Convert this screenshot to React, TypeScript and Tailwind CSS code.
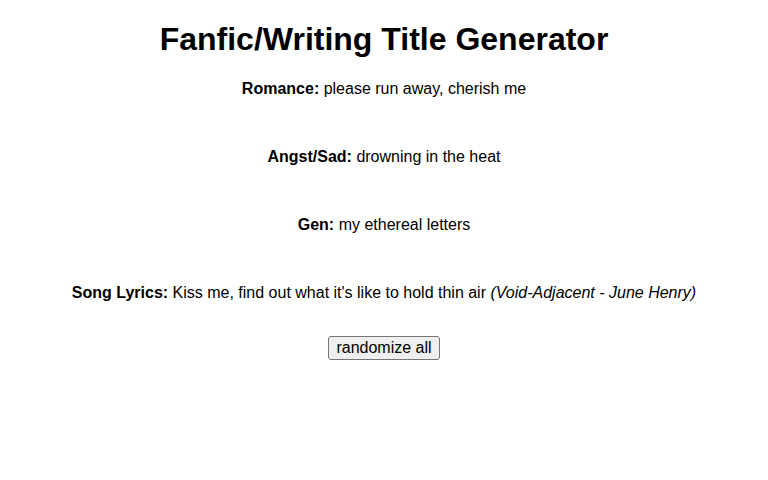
import React, { useState } from 'react';

type Category = {
  label: string;
  title: string;
  credit?: string;
};

const initial: Category[] = [
  { label: 'Romance', title: 'please run away, cherish me' },
  { label: 'Angst/Sad', title: 'drowning in the heat' },
  { label: 'Gen', title: 'my ethereal letters' },
  {
    label: 'Song Lyrics',
    title: "Kiss me, find out what it's like to hold thin air",
    credit: '(Void-Adjacent - June Henry)',
  },
];

const App = () => {
  const [items] = useState<Category[]>(initial);

  return (
    <div className="min-h-screen bg-white text-black font-['Liberation_Sans',Arial,sans-serif] flex flex-col items-center">
      <h1 className="mt-[21px] text-[32px] leading-[37px] font-bold">Fanfic/Writing Title Generator</h1>

      {/* one line per category */}
      <div className="mt-[22px] flex flex-col items-center gap-[50px]">
        {items.map(item => (
          <p key={item.label} className="text-[16px] leading-[18px] text-center">
            <b>{item.label}:</b> {item.title}
            {item.credit && (
              <>
                {' '}
                <i>{item.credit}</i>
              </>
            )}
          </p>
        ))}
      </div>

      <button className="mt-[34px] h-[24px] px-[7px] text-[16px] leading-[18px] bg-[#efefef] border border-[#767676] rounded-[3px] text-black">
        randomize all
      </button>
    </div>
  );
};

export default App;
